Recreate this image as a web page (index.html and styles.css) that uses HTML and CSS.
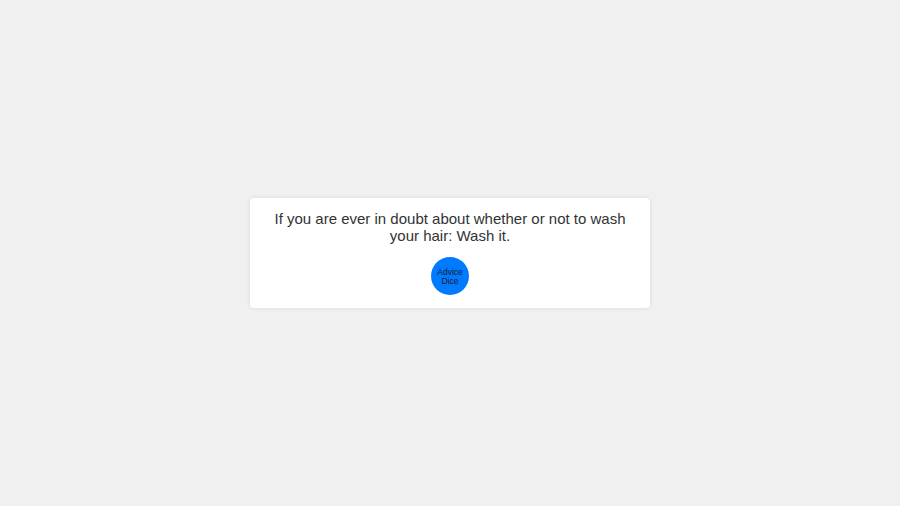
FILE: index.html
```html
<!DOCTYPE html>
<html>
<head>
<meta charset="utf-8">
<link rel="stylesheet" href="styles.css">
</head>
<body>
<div class="card">
  <p class="advice">If you are ever in doubt about whether or not to wash your hair: Wash it.</p>
  <button class="dice">Advice Dice</button>
</div>
</body>
</html>
```
FILE: styles.css
```css
html, body {
  margin: 0;
  height: 100%;
}
body {
  background: #f0f0f0;
  display: flex;
  align-items: center;
  justify-content: center;
  font-family: "Liberation Sans", Arial, sans-serif;
}
.card {
  box-sizing: border-box;
  width: 400px;
  height: 110px;
  background: #fff;
  border-radius: 4px;
  box-shadow: 0 0 4px rgba(0,0,0,0.1);
  padding: 12px 12px 12px;
  display: flex;
  flex-direction: column;
  align-items: center;
}
.advice {
  margin: 0 0 13px;
  font-size: 15px;
  line-height: 17px;
  color: #333;
  text-align: center;
}
.dice {
  width: 38px;
  height: 38px;
  border-radius: 50%;
  border: none;
  background: #007bff;
  color: #1a1a2e;
  font-family: "Liberation Sans", Arial, sans-serif;
  font-size: 8.5px;
  line-height: 9.5px;
  padding: 2px 0 0;
}
```
